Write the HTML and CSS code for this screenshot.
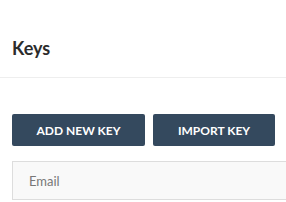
FILE: index.html
```html
<!DOCTYPE html>
<html lang="en">
<head>
    <meta charset="UTF-8">
    <meta name="viewport" content="width=device-width, initial-scale=1.0">
    <title>Keys</title>
    <link rel="stylesheet" href="styles.css">
</head>
<body>
    <div class="page-header">
        <h1>Keys</h1>
    </div>
    <div class="content">
        <div class="actions">
            <button class="btn btn-add">Add new key</button>
            <button class="btn btn-import">Import key</button>
        </div>
        <div class="table-wrap">
            <table class="keys-table">
                <thead>
                    <tr>
                        <th>Email</th>
                    </tr>
                </thead>
            </table>
        </div>
    </div>
</body>
</html>
```

FILE: styles.css
```css
body {
    font-family: 'Lato', 'Liberation Sans', sans-serif;
    background-color: #fff;
    color: #333;
    margin: 0;
    padding: 0;
    overflow: hidden;
}

.page-header {
    border-bottom: 1px solid #eee;
    padding: 0 12px;
    height: 78px;
    box-sizing: border-box;
}

h1 {
    margin: 0;
    padding-top: 37px;
    font-size: 18px;
    font-weight: 700;
    line-height: 22px;
    color: #2c2c2c;
}

.content {
    padding: 36px 0 0 12px;
}

.actions {
    display: flex;
    gap: 8px;
}

.btn {
    font-family: inherit;
    height: 32px;
    padding: 0;
    background-color: #34495e;
    border: none;
    border-radius: 2px;
    color: white;
    font-size: 12px;
    font-weight: 700;
    text-transform: uppercase;
}

.btn-add {
    width: 133px;
}

.btn-import {
    width: 122px;
}

/* table runs on past the window, like the wide page it came from */
.table-wrap {
    margin-top: 15px;
    overflow: hidden;
}

.keys-table {
    width: 600px;
    border-collapse: collapse;
}

.keys-table th {
    text-align: left;
    font-weight: 400;
    font-size: 13px;
    color: #777;
    background-color: #f9f9f9;
    border: 1px solid #ddd;
    height: 38px;
    padding: 0 16px;
    box-sizing: border-box;
}
```
